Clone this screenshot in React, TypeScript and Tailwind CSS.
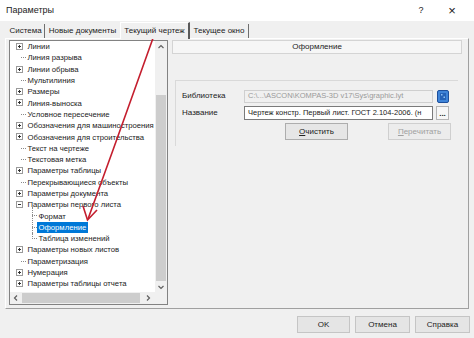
import React from "react";

type Item = { t: string; e?: "+" | "-"; c?: boolean; sel?: boolean; first?: boolean; last?: boolean };

const items: Item[] = [
  { t: "Линии", e: "+" },
  { t: "Линия разрыва" },
  { t: "Линии обрыва", e: "+" },
  { t: "Мультилиния" },
  { t: "Размеры", e: "+" },
  { t: "Линия-выноска", e: "+" },
  { t: "Условное пересечение" },
  { t: "Обозначения для машиностроения", e: "+" },
  { t: "Обозначения для строительства", e: "+" },
  { t: "Текст на чертеже" },
  { t: "Текстовая метка" },
  { t: "Параметры таблицы", e: "+" },
  { t: "Перекрывающиеся объекты" },
  { t: "Параметры документа", e: "+" },
  { t: "Параметры первого листа", e: "-" },
  { t: "Формат", c: true, first: true },
  { t: "Оформление", c: true, sel: true },
  { t: "Таблица изменений", c: true, last: true },
  { t: "Параметры новых листов", e: "+" },
  { t: "Параметризация" },
  { t: "Нумерация", e: "+" },
  { t: "Параметры таблицы отчета", e: "+" },
];

function Expander({ e }: { e: "+" | "-" }) {
  return (
    <svg width="7" height="7" viewBox="0 0 7 7" className="block">
      <rect x="0.5" y="0.5" width="6" height="6" fill="#fff" stroke="#9a9a9a" />
      <line x1="2" y1="3.5" x2="5" y2="3.5" stroke="#333" />
      {e === "+" && <line x1="3.5" y1="2" x2="3.5" y2="5" stroke="#333" />}
    </svg>
  );
}

function Row({ it }: { it: Item }) {
  return (
    <div className="relative h-[11.3px] flex items-center whitespace-nowrap">
      {!it.c ? (
        <div className="relative w-[16px] h-full shrink-0">
          {it.e ? (
            <div className="absolute left-[6px] top-[2px]">
              <Expander e={it.e} />
            </div>
          ) : (
            <div className="absolute left-[11px] top-[5px] w-[5px] border-t border-dotted border-[#8a8a8a]" />
          )}
        </div>
      ) : (
        <div className="relative w-[27px] h-full shrink-0">
          <div
            className={
              "absolute left-[22px] border-l border-dotted border-[#8a8a8a] " +
              (it.first ? "top-[-3px] " : "top-0 ") +
              (it.last ? "h-[6px] " : it.first ? "h-[14px] " : "h-full ")
            }
          />
          <div className="absolute left-[22px] top-[5px] w-[5px] border-t border-dotted border-[#8a8a8a]" />
        </div>
      )}
      <span
        className={
          "text-[7.7px] leading-[11px] px-[1.5px] " +
          (it.sel ? "bg-[#0078d7] text-white" : "text-[#222]")
        }
      >
        {it.t}
      </span>
    </div>
  );
}

function Chevron({ dir }: { dir: "up" | "down" | "left" | "right" }) {
  const d =
    dir === "up"
      ? "M1.5 5 L4 2.5 L6.5 5"
      : dir === "down"
      ? "M1.5 3 L4 5.5 L6.5 3"
      : dir === "left"
      ? "M5 1.5 L2.5 4 L5 6.5"
      : "M3 1.5 L5.5 4 L3 6.5";
  return (
    <svg width="8" height="8" viewBox="0 0 8 8" className="block">
      <path d={d} fill="none" stroke="#606060" strokeWidth="1.2" />
    </svg>
  );
}

function Tree() {
  return (
    <div className="ml-[3px] mt-[1px] w-[159px] h-[265px] border border-[#828282] bg-white flex flex-col">
      <div className="flex h-[251px]">
        <div className="flex-1 overflow-hidden">
          {items.map((it, i) => (
            <Row key={i} it={it} />
          ))}
        </div>
        <div className="w-[12px] bg-[#f0f0f0] flex flex-col">
          <div className="h-[12px] flex items-center justify-center">
            <Chevron dir="up" />
          </div>
          <div className="h-[42px]" />
          <div className="flex-1 mx-[1px] bg-[#cdcdcd]" />
          <div className="h-[11px] flex items-center justify-center">
            <Chevron dir="down" />
          </div>
        </div>
      </div>
      <div className="flex h-[12px]">
        <div className="flex-1 bg-[#f0f0f0] flex items-center">
          <div className="w-[12px] flex items-center justify-center">
            <Chevron dir="left" />
          </div>
          <div className="w-[118px] h-[10px] bg-[#cdcdcd]" />
          <div className="flex-1 flex items-center justify-center">
            <Chevron dir="right" />
          </div>
        </div>
        <div className="w-[12px] bg-[#f0f0f0]" />
      </div>
    </div>
  );
}

function LibIcon() {
  return (
    <svg width="12" height="13" viewBox="0 0 12 13" className="block">
      <rect x="0.5" y="0.5" width="11" height="12" rx="1.5" fill="#3f84d8" stroke="#1d4f9c" />
      <rect x="3" y="3" width="6" height="7" fill="#2563b8" />
      <rect x="4" y="4" width="1.5" height="1.5" fill="#8fc0f2" />
      <rect x="6.5" y="6.5" width="1.5" height="1.5" fill="#8fc0f2" />
    </svg>
  );
}

function RightPanel() {
  return (
    <div className="flex-1 flex flex-col">
      <div className="ml-[4px] mt-[1px] w-[290px] h-[14px] border border-[#d4d4d4] bg-[#f6f6f6] flex items-center justify-center text-[8px]">
        Оформление
      </div>
      <div className="ml-[7px] mt-[26px] w-[283px] h-[66px] border-t border-l border-[#d9d9d9] pl-[6px] pt-[8px] flex flex-col">
        <div className="flex items-center h-[14px]">
          <div className="w-[62px] text-[8px]">Библиотека</div>
          <div className="w-[189px] h-[13px] border border-[#cfcfcf] bg-[#f0f0f0] flex items-center pl-[3px] text-[7.5px] text-[#9a9a9a] whitespace-nowrap overflow-hidden">
            C:\...\ASCON\KOMPAS-3D v17\Sys\graphic.lyt
          </div>
          <div className="ml-[4px]">
            <LibIcon />
          </div>
        </div>
        <div className="flex items-center h-[14px] mt-[3px]">
          <div className="w-[62px] text-[8px]">Название</div>
          <div className="w-[189px] h-[14px] border border-[#7a7a7a] bg-white flex items-center pl-[3px] text-[7.5px] whitespace-nowrap overflow-hidden">
            Чертеж констр. Первый лист. ГОСТ 2.104-2006. (н
          </div>
          <div className="ml-[3px] w-[13px] h-[14px] border border-[#b5b5b5] bg-[#f7f7f7] flex items-end justify-center text-[8px] font-bold leading-[10px] overflow-hidden">
            ...
          </div>
        </div>
        <div className="flex items-center h-[17px] mt-[3px]">
          <div className="ml-[103px] w-[63px] h-[17px] border border-[#adadad] bg-[#e6e6e6] flex items-center justify-center text-[8px]">
            <span>
              <span className="underline">О</span>чистить
            </span>
          </div>
          <div className="ml-[40px] w-[63px] h-[17px] border border-[#cfcfcf] bg-[#ececec] flex items-center justify-center text-[8px] text-[#a0a0a0]">
            <span>
              <span className="underline">П</span>еречитать
            </span>
          </div>
        </div>
      </div>
    </div>
  );
}

export default function App() {
  return (
    <div className="relative w-[474px] h-[338px] overflow-hidden bg-[#f0f0f0] font-['Liberation_Sans',sans-serif] text-[#222]">
      <div className="h-[21px] bg-white flex items-center justify-between">
        <span className="pl-[6px] text-[9px]">Параметры</span>
        <div className="flex items-center pr-[6px]">
          <span className="w-[30px] text-center text-[9px]">?</span>
          <span className="w-[32px] text-center text-[13px] font-light">×</span>
        </div>
      </div>
      <div className="h-[17px] flex items-end pl-[7px] text-[8px] whitespace-nowrap">
        <div className="h-[14px] w-[38px] flex items-center justify-center border-r border-[#6f6f6f]">Система</div>
        <div className="h-[14px] w-[75px] flex items-center justify-center">Новые документы</div>
        <div className="h-[17px] w-[70px] flex items-start pt-[2px] justify-center border-t border-l border-white border-r-2 border-r-[#5a5a5a] -mb-[1px] bg-[#f0f0f0] z-10">
          Текущий чертеж
        </div>
        <div className="h-[14px] w-[59px] flex items-center justify-center border-r border-[#6f6f6f]">Текущее окно</div>
      </div>
      <div className="mx-[5px] h-[271px] border border-t-white border-l-white border-r-[#a0a0a0] border-b-[#a0a0a0] flex">
        <Tree />
        <RightPanel />
      </div>
      <div className="flex justify-end gap-[5px] pr-[4px] mt-[7px] text-[8px]">
        <div className="w-[53px] h-[17px] border border-[#c5c5c5] bg-[#e5e5e5] flex items-center justify-center">OK</div>
        <div className="w-[55px] h-[17px] border border-[#c5c5c5] bg-[#e5e5e5] flex items-center justify-center">Отмена</div>
        <div className="w-[55px] h-[17px] border border-[#c5c5c5] bg-[#e5e5e5] flex items-center justify-center">Справка</div>
      </div>
      <svg className="absolute inset-0 pointer-events-none" width="474" height="338" viewBox="0 0 474 338">
        <path d="M157 27 L113 150 L88 219" fill="none" stroke="#c41e2e" strokeWidth="1.6" />
        <path d="M83 206 L87.5 220 L97 210" fill="none" stroke="#c41e2e" strokeWidth="1.6" />
      </svg>
    </div>
  );
}
